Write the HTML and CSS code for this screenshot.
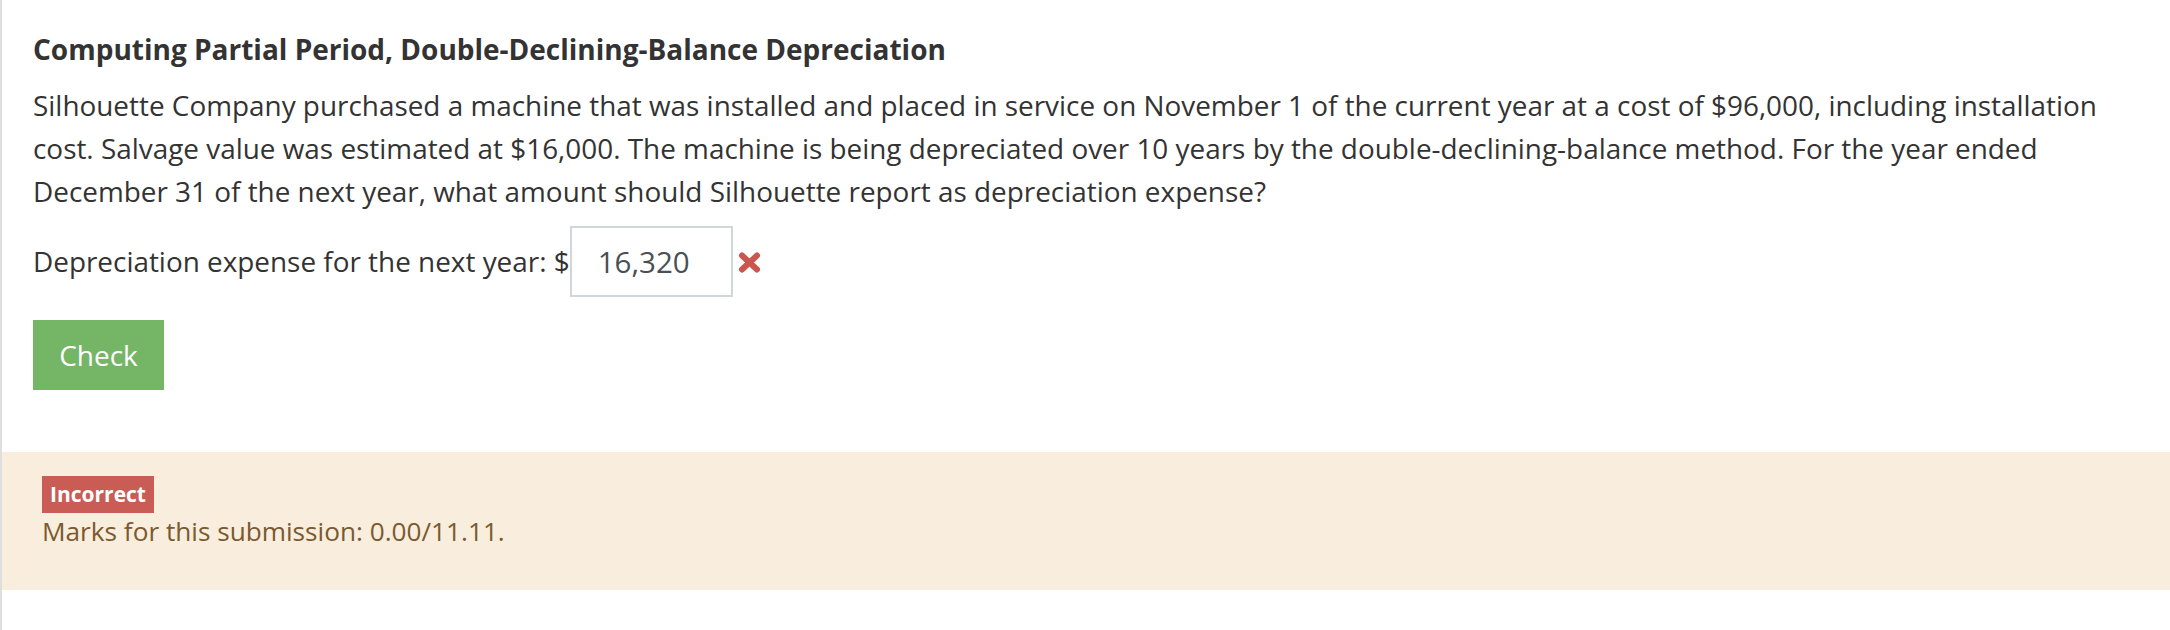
FILE: index.html
```html
<!DOCTYPE html>
<html lang="en">
<head>
<meta charset="utf-8">
<title>Computing Partial Period, Double-Declining-Balance Depreciation</title>
<link rel="stylesheet" href="styles.css">
</head>
<body>
<div class="page">
  <div class="question">
    <h2 class="q-title">Computing Partial Period, Double-Declining-Balance Depreciation</h2>
    <p class="q-text">Silhouette Company purchased a machine that was installed and placed in service on November 1 of the current year at a cost of $96,000, including installation cost. Salvage value was estimated at $16,000. The machine is being depreciated over 10 years by the double-declining-balance method. For the year ended December 31 of the next year, what amount should Silhouette report as depreciation expense?</p>
    <div class="answer-row">
      <span class="answer-label">Depreciation expense for the next year: $</span>
      <span class="answer-box">16,320</span>
      <svg class="wrong-icon" viewBox="0 0 23 21" width="23" height="21" aria-hidden="true">
        <path d="M4 3.5 L19 17.5 M19 3.5 L4 17.5" stroke="#c9574f" stroke-width="6" stroke-linecap="round" fill="none"/>
      </svg>
    </div>
    <button class="check-btn" type="button">Check</button>
  </div>
  <div class="feedback">
    <span class="badge">Incorrect</span>
    <div class="marks">Marks for this submission: 0.00/11.11.</div>
  </div>
</div>
</body>
</html>
```

FILE: styles.css
```css
html, body {
  margin: 0;
  padding: 0;
  background: #ffffff;
}

body {
  font-family: "Open Sans", "Noto Sans", Arial, sans-serif;
  color: #333333;
}

.page {
  border-left: 2px solid #dedede;
  min-height: 630px;
  box-sizing: border-box;
}

.question {
  padding: 33px 33px 0 31px;
}

.q-title {
  margin: 0;
  font-size: 28px;
  font-weight: 700;
  line-height: 33px;
  color: #333333;
}

.q-text {
  margin: 18px 0 0 0;
  font-size: 27.9px;
  line-height: 43px;
  color: #333333;
}

.answer-row {
  display: flex;
  align-items: center;
  margin-top: 13px;
  font-size: 27.9px;
}

.answer-label {
  line-height: 43px;
}

.answer-box {
  box-sizing: border-box;
  width: 163px;
  height: 71px;
  border: 2px solid #d1d6db;
  padding-left: 26px;
  display: flex;
  align-items: center;
  color: #4a4f55;
  font-size: 29.5px;
}

.wrong-icon {
  margin-left: 5px;
  margin-top: 2px;
}

.check-btn {
  display: block;
  margin-top: 23px;
  width: 131px;
  height: 70px;
  border: 0;
  border-radius: 0;
  background: #74b566;
  color: #ffffff;
  font-family: "Open Sans", "Noto Sans", Arial, sans-serif;
  font-size: 28px;
  padding: 0;
}

.feedback {
  margin-top: 62px;
  height: 138px;
  box-sizing: border-box;
  background: #f9eddd;
  padding: 24px 20px 0 40px;
}

.badge {
  display: inline-block;
  background: #c95c55;
  color: #ffffff;
  font-weight: 700;
  font-size: 21px;
  line-height: 37px;
  padding: 0 8px;
}

.marks {
  font-size: 26.2px;
  line-height: 36px;
  color: #7a5a2f;
}
```
